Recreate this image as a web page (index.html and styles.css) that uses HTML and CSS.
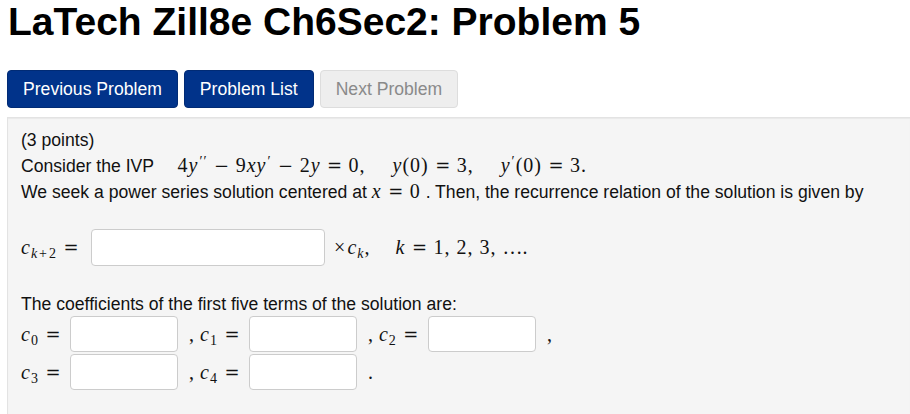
FILE: index.html
```html
<!DOCTYPE html>
<html lang="en">

<head>
    <meta charset="UTF-8">
    <meta name="viewport" content="width=device-width, initial-scale=1.0">
    <title>LaTech Zill8e Ch6Sec2: Problem 5</title>
    <link rel="stylesheet" href="styles.css">
</head>

<body>
    <h1 class="title">LaTech Zill8e Ch6Sec2: Problem 5</h1>

    <div class="nav">
        <a class="btn" href="#">Previous Problem</a>
        <a class="btn" href="#">Problem List</a>
        <span class="btn disabled">Next Problem</span>
    </div>

    <div class="problem">
        <p class="intro">
            (3 points)<br>
            Consider the IVP
            <span class="math eq first"><span class="n">4</span><i>y</i><span class="pr">′′</span><span class="op">−</span><span class="n">9</span><i>x</i><i>y</i><span class="pr">′</span><span class="op">−</span><span class="n">2</span><i>y</i><span class="op">=</span><span class="n">0</span>,</span>
            <span class="math eq"><i>y</i>(0)<span class="op">=</span>3,</span>
            <span class="math eq"><i>y</i><span class="pr">′</span>(0)<span class="op">=</span>3.</span><br>
            We seek a power series solution centered at <span class="math"><i>x</i><span class="op">=</span>0</span>
            . Then, the recurrence relation of the solution is given by
        </p>

        <div class="row recur">
            <span class="math"><i>c</i><sub class="wide-sub"><i>k</i><span class="plus">+</span>2</sub><span class="op">=</span></span>
            <input class="answer wide" type="text">
            <span class="math after"><span class="times">×</span><i>c</i><sub><i>k</i></sub>,</span>
            <span class="math range"><i>k</i><span class="op">=</span>1, 2, 3, …<span class="dot">.</span></span>
        </div>

        <p class="coef-label">The coefficients of the first five terms of the solution are:</p>

        <div class="row coef">
            <span class="math"><i>c</i><sub>0</sub><span class="op">=</span></span>
            <input class="answer" type="text">
            <span class="sep">,</span>
            <span class="math"><i>c</i><sub>1</sub><span class="op">=</span></span>
            <input class="answer" type="text">
            <span class="sep">,</span>
            <span class="math"><i>c</i><sub>2</sub><span class="op">=</span></span>
            <input class="answer" type="text">
            <span class="sep">,</span>
        </div>
        <div class="row coef">
            <span class="math"><i>c</i><sub>3</sub><span class="op">=</span></span>
            <input class="answer" type="text">
            <span class="sep">,</span>
            <span class="math"><i>c</i><sub>4</sub><span class="op">=</span></span>
            <input class="answer" type="text">
            <span class="sep">.</span>
        </div>
    </div>
</body>

</html>
```

FILE: styles.css
```css
html,
body {
    overflow: hidden;
}

body {
    font-family: 'Liberation Sans', Arial, Helvetica, sans-serif;
    font-size: 17.6px;
    color: #111;
    background-color: #fff;
    margin: 0;
}

.title {
    margin: 0 0 26px 8px;
    font-size: 39px;
    line-height: 44px;
    font-weight: bold;
    color: #000;
    white-space: nowrap;
}

.nav {
    display: flex;
    gap: 6px;
    margin-left: 7px;
}

.btn {
    display: inline-block;
    height: 38px;
    box-sizing: border-box;
    padding: 8px 15px;
    line-height: 20px;
    font-size: 17.6px;
    color: #fff;
    background-color: #01338a;
    border: 1px solid #012b75;
    border-radius: 4px;
    text-decoration: none;
}

.btn.disabled {
    color: #8a8a8a;
    background-color: #eee;
    border-color: #ddd;
}

.problem {
    margin: 9px 0 0 7px;
    padding: 10px 0 40px 13px;
    background-color: #f5f5f5;
    border: 1px solid #e3e3e3;
    border-right: none;
    box-shadow: inset 0 1px 1px rgba(0, 0, 0, 0.05);
    min-height: 300px;
}

.intro {
    margin: 0;
    line-height: 25px;
}

.math {
    font-family: 'Liberation Serif', 'DejaVu Serif', serif;
    font-size: 20px;
    letter-spacing: 1px;
    white-space: nowrap;
}

.math i {
    font-style: italic;
}

.math sub {
    font-size: 14px;
    vertical-align: -4px;
    line-height: 0;
}

.math .op {
    font-family: 'DejaVu Serif', serif;
    font-size: 18px;
    letter-spacing: 0;
    margin: 0 6.5px;
}

.math .pr {
    font-size: 14px;
    vertical-align: 6px;
    line-height: 0;
    margin-left: 1px;
}

.math.eq {
    margin-left: 22px;
}

.math.eq.first {
    margin-left: 19px;
}

.wide-sub {
    letter-spacing: 1px;
}

.plus {
    margin: 0 1px;
}

.row {
    white-space: nowrap;
}

.recur {
    margin-top: 22px;
    height: 40px;
    display: flex;
    align-items: center;
}

.recur .answer {
    margin-left: 6px;
    margin-right: 0;
}

.recur .after {
    margin-left: 9px;
}

.recur .range {
    margin-left: 25px;
}

.times {
    margin-right: 1px;
}

.dot {
    margin-left: -1px;
}

.coef-label {
    margin: 27px 0 1px;
    line-height: 20px;
}

.coef {
    display: flex;
    align-items: center;
    height: 38px;
}

.answer {
    width: 108px;
    height: 36px;
    box-sizing: border-box;
    margin: 0 0 0 3px;
    padding: 4px 6px;
    border: 1px solid #ccc;
    border-radius: 4px;
    background-color: #fff;
    font-size: 16px;
}

.answer.wide {
    width: 234px;
    height: 37px;
}

.sep {
    font-family: 'Liberation Serif', serif;
    font-size: 20px;
    margin: 0 6px 0 11px;
}
```
